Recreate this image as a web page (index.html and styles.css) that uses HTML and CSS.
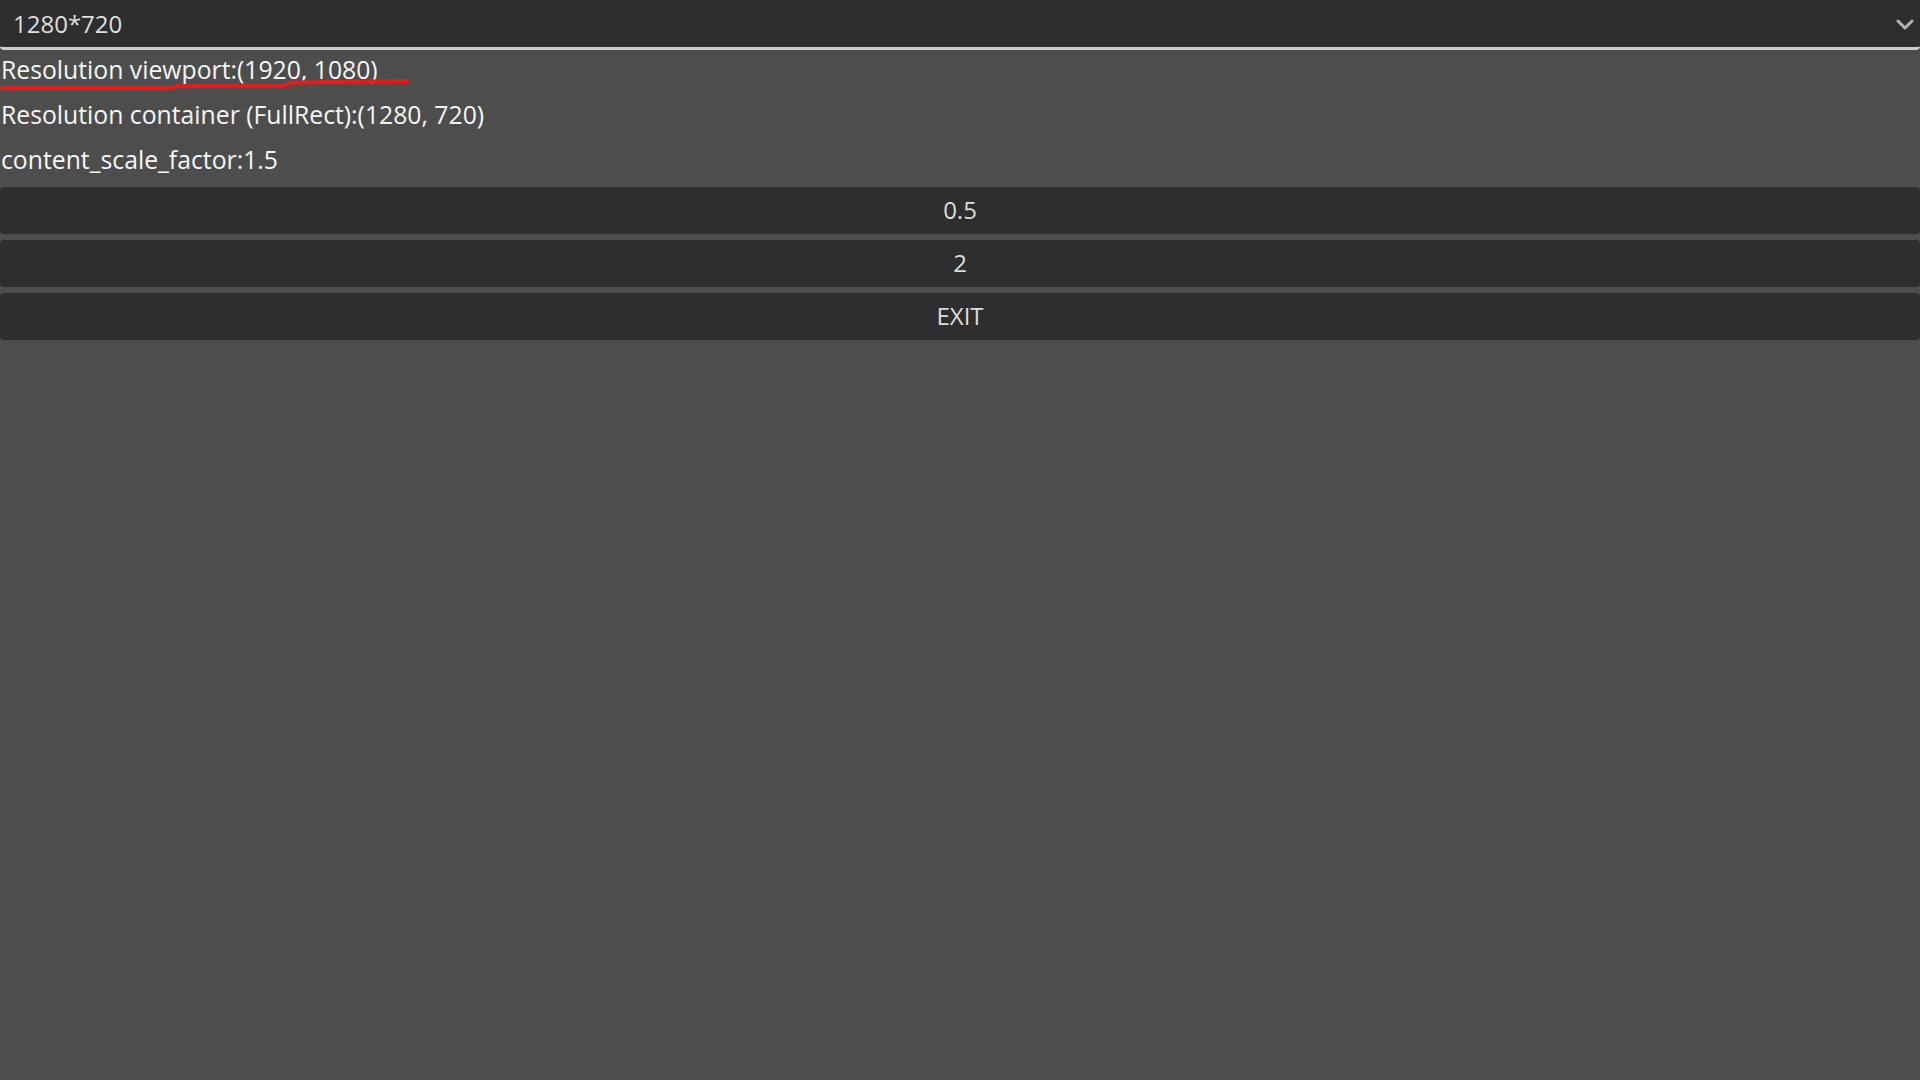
FILE: index.html
```html
<!DOCTYPE html>
<html>
<head>
<meta charset="utf-8">
<link rel="stylesheet" href="styles.css">
</head>
<body>
<div class="app">
  <div class="select">
    <span class="select-value">1280*720</span>
    <svg class="chevron" width="18" height="12" viewBox="0 0 18 12"><path d="M2 2 L9 9 L16 2" fill="none" stroke="#b4b4b4" stroke-width="3" stroke-linecap="round" stroke-linejoin="round"/></svg>
  </div>
  <div class="labels">
    <div class="label marked">Resolution viewport:(1920, 1080)
      <svg class="scribble" width="420" height="14" viewBox="0 0 420 14"><path d="M2 10 L170 10 L176 8 L284 7.5 L290 4.5 L407 3" fill="none" stroke="#e31d1d" stroke-width="4" stroke-linecap="round" stroke-linejoin="round"/></svg>
    </div>
    <div class="label">Resolution container (FullRect):(1280, 720)</div>
    <div class="label">content_scale_factor:1.5</div>
  </div>
  <div class="buttons">
    <div class="btn">0.5</div>
    <div class="btn">2</div>
    <div class="btn">EXIT</div>
  </div>
</div>
</body>
</html>
```
FILE: styles.css
```css
html, body {
  margin: 0;
  padding: 0;
  width: 1920px;
  height: 1080px;
  background: #4d4d4d;
  overflow: hidden;
}
.app {
  display: flex;
  flex-direction: column;
  font-family: "Open Sans", "Noto Sans", sans-serif;
}
.select {
  height: 47px;
  background: #2e2e2e;
  border-bottom: 3px solid #cdcdcd;
  border-radius: 0 0 4px 4px;
  display: flex;
  align-items: center;
  justify-content: space-between;
  padding: 0 6px 0 13px;
  color: #dfdfdf;
  font-size: 24px;
}
.select-value {
  line-height: 47px;
}
.chevron {
  margin-top: 2px;
}
.labels {
  display: flex;
  flex-direction: column;
  gap: 12px;
  margin-top: 3px;
}
.label {
  position: relative;
  color: #f6f6f6;
  font-size: 24.75px;
  line-height: 33px;
  padding-left: 1px;
}
.scribble {
  position: absolute;
  left: 0;
  top: 25px;
}
.buttons {
  display: flex;
  flex-direction: column;
  gap: 6px;
  margin-top: 11px;
}
.btn {
  height: 47px;
  box-sizing: border-box;
  padding-bottom: 2px;
  background: #2e2e2e;
  border-radius: 4px;
  color: #dcdcdc;
  font-size: 24px;
  display: flex;
  align-items: center;
  justify-content: center;
}
```
